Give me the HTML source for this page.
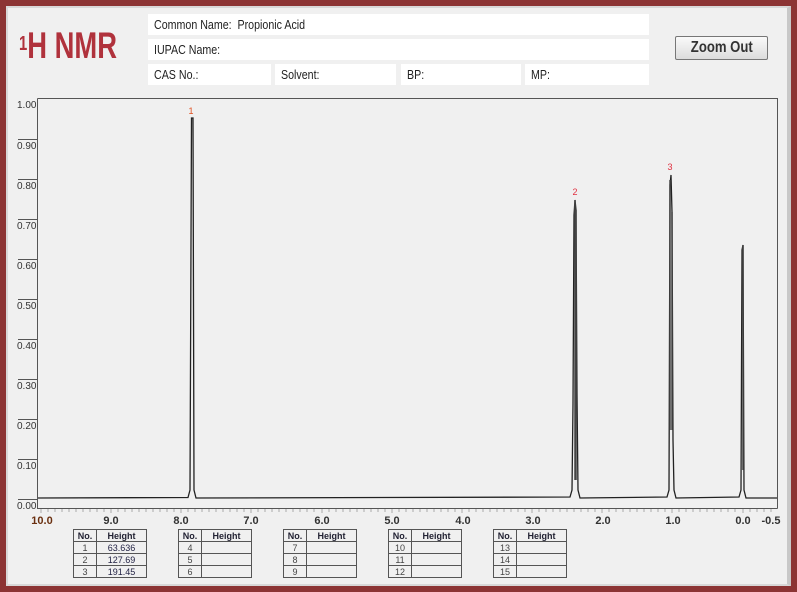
<!DOCTYPE html>
<html><head><meta charset="utf-8"><style>
*{margin:0;padding:0;box-sizing:border-box}
body{width:797px;height:592px;background:#8c3434;position:relative;overflow:hidden;font-family:"Liberation Sans",sans-serif}
.panel{position:absolute;left:6px;top:6px;width:785px;height:580px;background:#f0f0f0;border:2px solid #d8d8d8;border-right:4px solid #c8c8c8}
.box{position:absolute;background:#fff;height:21px;font-size:13px;color:#222;line-height:21px;padding-left:6px;white-space:nowrap}
.box span{display:inline-block;transform:scaleX(.82);transform-origin:left}
.title{position:absolute;left:19px;top:26px;color:#b0323c;font-weight:bold;font-size:37px;transform:scaleX(.74);transform-origin:left;line-height:40px}
.title sup{font-size:20px;vertical-align:top;position:relative;top:-2px}
.btn{position:absolute;left:675px;top:36px;width:93px;height:24px;border:1px solid #777;border-radius:2px;background:linear-gradient(#fafafa,#dcdcdc);font-weight:bold;font-size:16px;color:#333;text-align:center;line-height:22px}
.btn span{display:inline-block;transform:scaleX(.82)}
table{position:absolute;top:529px;border-collapse:collapse;font-size:9px;width:74px}
td{border:1px solid #555;height:12px;text-align:center;padding:0;line-height:10px}
td:first-child{width:23px;color:#444}
td.h{color:#223;font-weight:bold}
td.v{color:#224}
</style></head><body>
<div class="panel"></div>
<div class="title"><sup>1</sup>H NMR</div>
<div class="box" style="left:148px;top:14px;width:501px"><span>Common Name:&nbsp; Propionic Acid</span></div>
<div class="box" style="left:148px;top:39px;width:501px"><span>IUPAC Name:</span></div>
<div class="box" style="left:148px;top:64px;width:123px"><span>CAS No.:</span></div>
<div class="box" style="left:275px;top:64px;width:121px"><span>Solvent:</span></div>
<div class="box" style="left:401px;top:64px;width:120px"><span>BP:</span></div>
<div class="box" style="left:525px;top:64px;width:124px"><span>MP:</span></div>
<div class="btn"><span>Zoom Out</span></div>
<svg style="position:absolute;left:0;top:0" width="797" height="592">
<g stroke="#555" fill="none" stroke-width="1">
<path d="M37.5 98.5H777.5V508.5M37.5 98.5V508.5H777.5"/>
<path d="M18 139.5H37M18 179.5H37M18 219.5H37M18 259.5H37M18 299.5H37M18 339.5H37M18 379.5H37M18 419.5H37M18 459.5H37M18 499.5H37"/>
</g>
<g font-size="10" fill="#333" font-family="Liberation Sans">
<text x="17" y="108">1.00</text><text x="17" y="149">0.90</text><text x="17" y="189">0.80</text><text x="17" y="229">0.70</text><text x="17" y="269">0.60</text><text x="17" y="309">0.50</text><text x="17" y="349">0.40</text><text x="17" y="389">0.30</text><text x="17" y="429">0.20</text><text x="17" y="469">0.10</text><text x="17" y="509">0.00</text>
</g>
<g stroke="#aaa" stroke-width="1">
<path d="M41 509v4M48 509v3M55 509v3M62 509v3M69 509v3M76 509v3M83 509v3M90 509v3M97 509v3M104 509v3M111 509v4M118 509v3M125 509v3M132 509v3M139 509v3M146 509v3M153 509v3M160 509v3M167 509v3M174 509v3M181 509v4M188 509v3M195 509v3M202 509v3M209 509v3M216 509v3M223 509v3M230 509v3M237 509v3M244 509v3M251 509v4M258 509v3M265 509v3M272 509v3M279 509v3M286 509v3M293 509v3M300 509v3M307 509v3M314 509v3M322 509v4M329 509v3M336 509v3M343 509v3M350 509v3M357 509v3M364 509v3M371 509v3M378 509v3M385 509v3M392 509v4M399 509v3M406 509v3M413 509v3M420 509v3M427 509v3M434 509v3M441 509v3M448 509v3M455 509v3M462 509v4M469 509v3M476 509v3M483 509v3M490 509v3M497 509v3M504 509v3M511 509v3M518 509v3M525 509v3M532 509v4M539 509v3M546 509v3M553 509v3M560 509v3M567 509v3M574 509v3M581 509v3M588 509v3M595 509v3M602 509v4M609 509v3M616 509v3M623 509v3M630 509v3M637 509v3M644 509v3M651 509v3M658 509v3M665 509v3M672 509v4M679 509v3M686 509v3M693 509v3M700 509v3M707 509v3M714 509v3M721 509v3M728 509v3M735 509v3M743 509v4M750 509v3M757 509v3M764 509v3M771 509v3"/>
</g>
<g font-size="11" font-weight="bold" fill="#333" font-family="Liberation Sans" text-anchor="middle">
<text x="42" y="524" fill="#6a3010">10.0</text><text x="111" y="524">9.0</text><text x="181" y="524">8.0</text><text x="251" y="524">7.0</text><text x="322" y="524">6.0</text><text x="392" y="524">5.0</text><text x="463" y="524">4.0</text><text x="533" y="524">3.0</text><text x="603" y="524">2.0</text><text x="673" y="524">1.0</text><text x="743" y="524">0.0</text><text x="771" y="524">-0.5</text>
</g>
<path d="M38 498L188 497.5L190 490L191.5 118L193 118L194 490L196 498L570 497L572 490L573 404L574 215L575 200L576 210L577 395L578 490L580 498L667 497L669 490L670 185L671 175L672 212L673 440L674 490L676 498L739 497L741 490L742 250L743 245L744 490L746 498L777 498" fill="none" stroke="#222" stroke-width="1.3"/>
<path d="M575 200V480M576 210V480M670 180V430M672 212V430M743 245V470" stroke="#444" stroke-width="1.5"/>
<g font-size="9" fill="#e03040" font-family="Liberation Sans" text-anchor="middle">
<text x="191" y="114" fill="#e05020">1</text><text x="575" y="195">2</text><text x="670" y="170">3</text>
</g>
</svg>
<table style="left:73px"><tr><td class="h">No.</td><td class="h">Height</td></tr><tr><td>1</td><td class="v">63.636</td></tr><tr><td>2</td><td class="v">127.69</td></tr><tr><td>3</td><td class="v">191.45</td></tr></table>
<table style="left:178px"><tr><td class="h">No.</td><td class="h">Height</td></tr><tr><td>4</td><td></td></tr><tr><td>5</td><td></td></tr><tr><td>6</td><td></td></tr></table>
<table style="left:283px"><tr><td class="h">No.</td><td class="h">Height</td></tr><tr><td>7</td><td></td></tr><tr><td>8</td><td></td></tr><tr><td>9</td><td></td></tr></table>
<table style="left:388px"><tr><td class="h">No.</td><td class="h">Height</td></tr><tr><td>10</td><td></td></tr><tr><td>11</td><td></td></tr><tr><td>12</td><td></td></tr></table>
<table style="left:493px"><tr><td class="h">No.</td><td class="h">Height</td></tr><tr><td>13</td><td></td></tr><tr><td>14</td><td></td></tr><tr><td>15</td><td></td></tr></table>
</body></html>
